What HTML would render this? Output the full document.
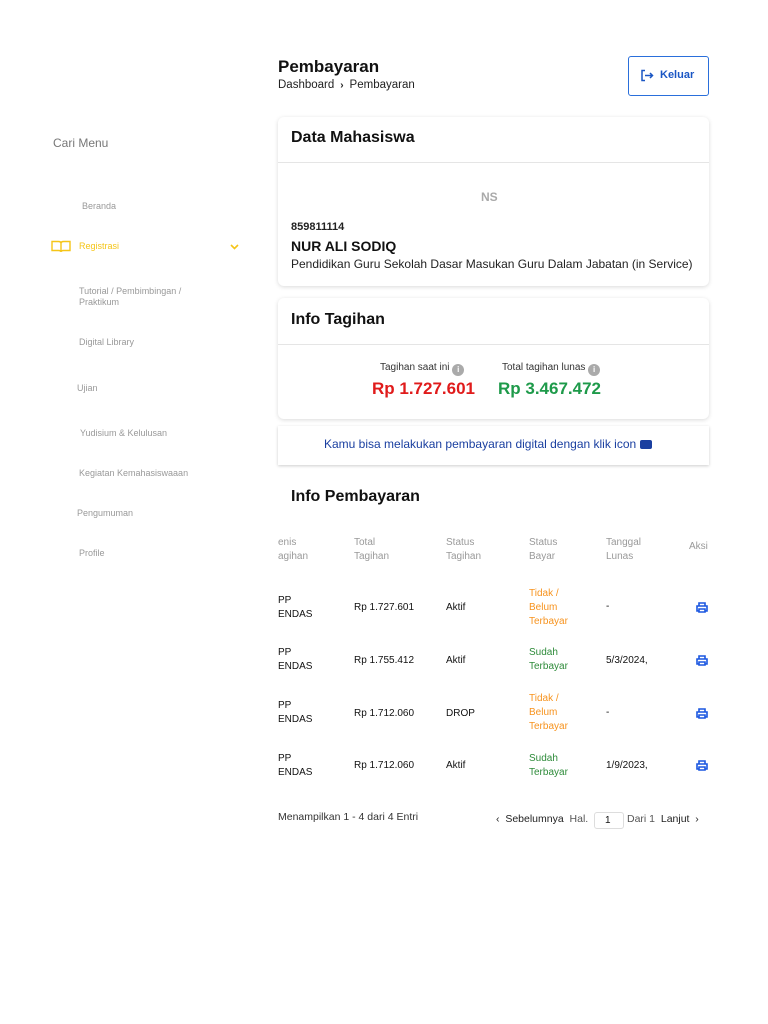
<!DOCTYPE html>
<html><head><meta charset="utf-8"><style>
*{margin:0;padding:0;box-sizing:border-box}
body{width:768px;height:1024px;background:#fff;font-family:"Liberation Sans",sans-serif;position:relative;overflow:hidden;color:#111}
.a{position:absolute;white-space:nowrap}
.side{font-size:9px;color:#999}
.card{position:absolute;left:278px;width:431px;background:#fff;border-radius:6px;box-shadow:0 1px 4px rgba(0,0,0,.15)}
.hd{font-size:10px;color:#999;line-height:14px}
.td{font-size:10px;line-height:14px;color:#111}
.or{color:#f7931e}.gr{color:#2e8b3a}
</style></head><body>
<div class="a" style="left:53px;top:136px;font-size:12px;color:#777">Cari Menu</div>
<div class="a side" style="left:82px;top:201px">Beranda</div>
<svg class="a" style="left:51px;top:240px" width="20" height="13" viewBox="0 0 20 13"><path d="M1 1.5h6.5q2.5 0 2.5 2V12q0-1.5-2.5-1.5H1zM19 1.5h-6.5q-2.5 0-2.5 2V12q0-1.5 2.5-1.5H19z" fill="none" stroke="#f5c518" stroke-width="1.4"/></svg>
<div class="a side" style="left:79px;top:241px;color:#f5c518">Registrasi</div>
<svg class="a" style="left:230px;top:244px" width="9" height="6" viewBox="0 0 9 6"><path d="M1 1l3.5 3.5L8 1" fill="none" stroke="#f5c518" stroke-width="1.6"/></svg>
<div class="a side" style="left:79px;top:286px;line-height:11px">Tutorial / Pembimbingan /<br>Praktikum</div>
<div class="a side" style="left:79px;top:337px">Digital Library</div>
<div class="a side" style="left:77px;top:383px">Ujian</div>
<div class="a side" style="left:80px;top:428px">Yudisium &amp; Kelulusan</div>
<div class="a side" style="left:79px;top:468px">Kegiatan Kemahasiswaaan</div>
<div class="a side" style="left:77px;top:508px">Pengumuman</div>
<div class="a side" style="left:79px;top:548px">Profile</div>

<div class="a" style="left:278px;top:57px;font-size:17px;font-weight:bold">Pembayaran</div>
<div class="a" style="left:278px;top:79px;font-size:11.5px;color:#222">Dashboard <span style="font-size:10px;font-weight:bold">&nbsp;›&nbsp;</span> Pembayaran</div>
<div class="a" style="left:628px;top:56px;width:81px;height:40px;border:1px solid #2a6fdb;border-radius:3px;"></div>
<svg class="a" style="left:640px;top:69px" width="14" height="13" viewBox="0 0 14 13"><path d="M5 1.5H2v10h3M5 6.5h7.5M10 4l2.5 2.5L10 9" fill="none" stroke="#1a56c4" stroke-width="1.5"/></svg>
<div class="a" style="left:660px;top:69px;font-size:11px;font-weight:bold;color:#1a56c4">Keluar</div>

<div class="card" style="top:117px;height:169px">
 <div class="a" style="left:13px;top:12px;font-size:16px;font-weight:bold">Data Mahasiswa</div>
 <div class="a" style="left:0;top:45px;width:431px;border-top:1px solid #e5e5e5"></div>
 <div class="a" style="left:203px;top:73px;font-size:12px;font-weight:bold;color:#aaa">NS</div>
 <div class="a" style="left:13px;top:104px;font-size:11px;font-weight:bold;color:#222">859811114</div>
 <div class="a" style="left:13px;top:121px;font-size:14px;font-weight:bold">NUR ALI SODIQ</div>
 <div class="a" style="left:13px;top:140px;font-size:12px;color:#222">Pendidikan Guru Sekolah Dasar Masukan Guru Dalam Jabatan (in Service)</div>
</div>

<div class="card" style="top:298px;height:121px">
 <div class="a" style="left:13px;top:13px;font-size:16px;font-weight:bold">Info Tagihan</div>
 <div class="a" style="left:0;top:46px;width:431px;border-top:1px solid #e5e5e5"></div>
 <div class="a" style="left:102px;top:64px;font-size:10px;color:#333">Tagihan saat ini <span style="display:inline-block;width:12px;height:12px;border-radius:6px;background:#aaa;color:#fff;font-size:8px;text-align:center;line-height:12px;font-weight:bold;vertical-align:-2px">i</span></div>
 <div class="a" style="left:224px;top:64px;font-size:10px;color:#333">Total tagihan lunas <span style="display:inline-block;width:12px;height:12px;border-radius:6px;background:#aaa;color:#fff;font-size:8px;text-align:center;line-height:12px;font-weight:bold;vertical-align:-2px">i</span></div>
 <div class="a" style="left:94px;top:81px;font-size:17px;font-weight:bold;color:#e01b1b">Rp 1.727.601</div>
 <div class="a" style="left:220px;top:81px;font-size:17px;font-weight:bold;color:#1e9a4a">Rp 3.467.472</div>
</div>

<div class="a" style="left:278px;top:426px;width:431px;height:39px;background:#fff;box-shadow:0 1px 3px rgba(0,0,0,.2)"></div>
<div class="a" style="left:324px;top:437px;font-size:12px;color:#1a3fa0">Kamu bisa melakukan pembayaran digital dengan klik icon <span style="display:inline-block;width:12px;height:9px;background:#1a3fa0;border-radius:2px;vertical-align:-1px"></span></div>

<div class="a" style="left:291px;top:488px;font-size:16px;font-weight:bold">Info Pembayaran</div>

<div class="a hd" style="left:278px;top:536px">enis<br>agihan</div>
<div class="a hd" style="left:354px;top:536px">Total<br>Tagihan</div>
<div class="a hd" style="left:446px;top:536px">Status<br>Tagihan</div>
<div class="a hd" style="left:529px;top:536px">Status<br>Bayar</div>
<div class="a hd" style="left:606px;top:536px">Tanggal<br>Lunas</div>
<div class="a hd" style="left:689px;top:540px">Aksi</div>

<div class="a td" style="left:278px;top:594px">PP<br>ENDAS</div>
<div class="a td" style="left:354px;top:601px">Rp 1.727.601</div>
<div class="a td" style="left:446px;top:601px">Aktif</div>
<div class="a td or" style="left:529px;top:587px">Tidak /<br>Belum<br>Terbayar</div>
<div class="a td" style="left:606px;top:600px">-</div>

<div class="a td" style="left:278px;top:646px">PP<br>ENDAS</div>
<div class="a td" style="left:354px;top:654px">Rp 1.755.412</div>
<div class="a td" style="left:446px;top:654px">Aktif</div>
<div class="a td gr" style="left:529px;top:646px">Sudah<br>Terbayar</div>
<div class="a td" style="left:606px;top:654px">5/3/2024,</div>

<div class="a td" style="left:278px;top:699px">PP<br>ENDAS</div>
<div class="a td" style="left:354px;top:707px">Rp 1.712.060</div>
<div class="a td" style="left:446px;top:707px">DROP</div>
<div class="a td or" style="left:529px;top:692px">Tidak /<br>Belum<br>Terbayar</div>
<div class="a td" style="left:606px;top:706px">-</div>

<div class="a td" style="left:278px;top:752px">PP<br>ENDAS</div>
<div class="a td" style="left:354px;top:759px">Rp 1.712.060</div>
<div class="a td" style="left:446px;top:759px">Aktif</div>
<div class="a td gr" style="left:529px;top:752px">Sudah<br>Terbayar</div>
<div class="a td" style="left:606px;top:759px">1/9/2023,</div>

<svg class="a" style="left:696px;top:602px" width="12" height="11" viewBox="0 0 12 11"><path d="M3 4V1h6v3M1 4h10v5H9V7H3v2H1z M3 7h6v3H3z" fill="none" stroke="#1a56e0" stroke-width="1.6"/></svg>
<svg class="a" style="left:696px;top:655px" width="12" height="11" viewBox="0 0 12 11"><path d="M3 4V1h6v3M1 4h10v5H9V7H3v2H1z M3 7h6v3H3z" fill="none" stroke="#1a56e0" stroke-width="1.6"/></svg>
<svg class="a" style="left:696px;top:708px" width="12" height="11" viewBox="0 0 12 11"><path d="M3 4V1h6v3M1 4h10v5H9V7H3v2H1z M3 7h6v3H3z" fill="none" stroke="#1a56e0" stroke-width="1.6"/></svg>
<svg class="a" style="left:696px;top:760px" width="12" height="11" viewBox="0 0 12 11"><path d="M3 4V1h6v3M1 4h10v5H9V7H3v2H1z M3 7h6v3H3z" fill="none" stroke="#1a56e0" stroke-width="1.6"/></svg>

<div class="a" style="left:278px;top:811px;font-size:10.5px;color:#333">Menampilkan 1 - 4 dari 4 Entri</div>
<div class="a" style="left:496px;top:813px;font-size:10.5px;color:#222">‹ &nbsp;Sebelumnya <span style="color:#555">&nbsp;Hal.</span></div>
<div class="a" style="left:594px;top:812px;width:30px;height:17px;border:1px solid #ddd;border-radius:3px;font-size:10px;line-height:15px;padding-left:10px">1</div>
<div class="a" style="left:627px;top:813px;font-size:10.5px;color:#555">Dari 1 <span style="color:#222">&nbsp;Lanjut &nbsp;›</span></div>
</body></html>
